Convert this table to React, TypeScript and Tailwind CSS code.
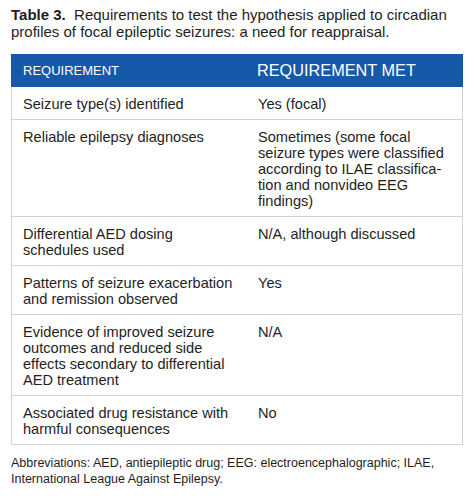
import React from "react";

const rows: [React.ReactNode, React.ReactNode][] = [
  ["Seizure type(s) identified", "Yes (focal)"],
  [
    "Reliable epilepsy diagnoses",
    <>
      Sometimes (some focal
      <br />
      seizure types were classified
      <br />
      according to ILAE classifica-
      <br />
      tion and nonvideo EEG
      <br />
      findings)
    </>,
  ],
  [
    <>
      Differential AED dosing
      <br />
      schedules used
    </>,
    "N/A, although discussed",
  ],
  [
    <>
      Patterns of seizure exacerbation
      <br />
      and remission observed
    </>,
    "Yes",
  ],
  [
    <>
      Evidence of improved seizure
      <br />
      outcomes and reduced side
      <br />
      effects secondary to differential
      <br />
      AED treatment
    </>,
    "N/A",
  ],
  [
    <>
      Associated drug resistance with
      <br />
      harmful consequences
    </>,
    "No",
  ],
];

export default function App() {
  return (
    <div
      className="w-[474px] h-[496px] bg-white text-[#1e1e1e] overflow-hidden"
      style={{ fontFamily: '"Liberation Sans", Arial, sans-serif' }}
    >
      <div className="pl-[11px] pt-[6px] text-[15px] leading-[17px] whitespace-nowrap">
        <span className="font-bold">Table 3.</span>
        {"\u00a0 "}Requirements to test the hypothesis applied to circadian
        <br />
        profiles of focal epileptic seizures: a need for reappraisal.
      </div>
      <div className="ml-[11px] mt-[14px] w-[452px] border border-[#d2d2d2]">
        <div className="flex items-center h-[33px] bg-[#1659a8] text-white -mx-px -mt-px">
          <div className="w-[236px] pl-[12px] text-[13px]">REQUIREMENT</div>
          <div className="pl-[10px] text-[16.3px]">REQUIREMENT MET</div>
        </div>
        {rows.map(([a, b], i) => (
          <div
            key={i}
            className={`flex text-[14.6px] leading-[16px] pt-[9px] pb-[7px] ${
              i < rows.length - 1 ? "border-b border-[#d2d2d2]" : ""
            }`}
          >
            <div className="w-[235px] pl-[11px] whitespace-nowrap">{a}</div>
            <div className="pl-[11px] whitespace-nowrap">{b}</div>
          </div>
        ))}
      </div>
      <div className="pl-[11px] pt-[11px] text-[12.5px] leading-[15.5px] whitespace-nowrap">
        Abbreviations: AED, antiepileptic drug; EEG: electroencephalographic; ILAE,
        <br />
        International League Against Epilepsy.
      </div>
    </div>
  );
}
